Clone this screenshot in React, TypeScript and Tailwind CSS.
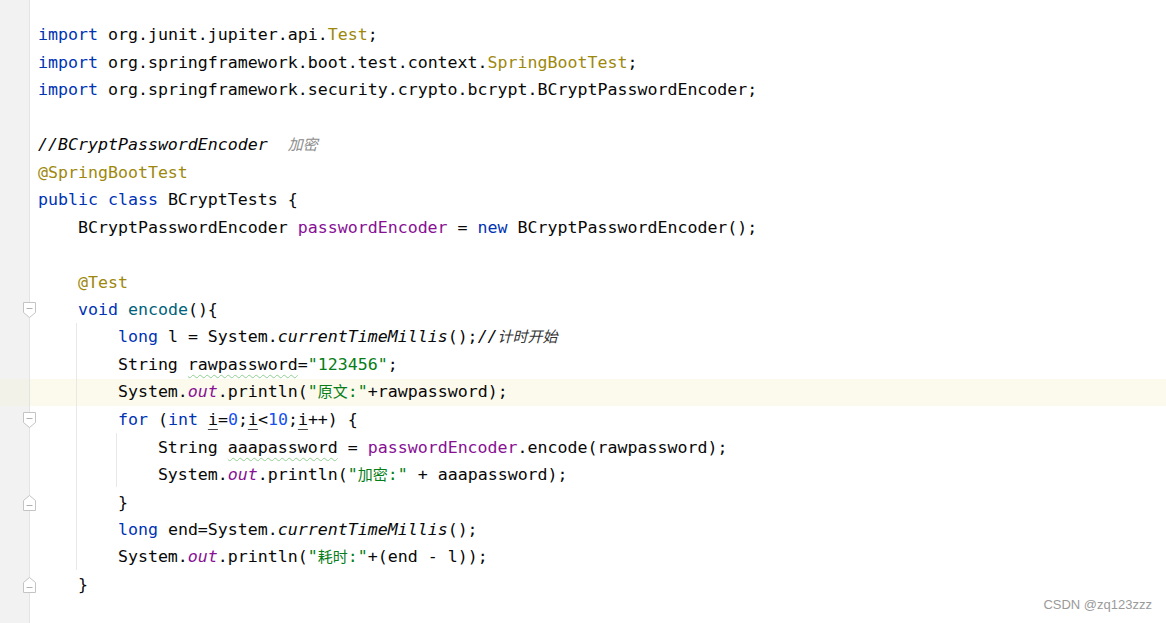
import React from 'react';

type Tok = [string, string?];

const K = 'text-[#0033b3]';
const A = 'text-[#9e880d]';
const F = 'text-[#871094]';
const FI = 'text-[#871094] italic';
const S = 'text-[#067d17]';
const N = 'text-[#1750eb]';
const C = 'text-[#8c8c8c] italic';
const M = 'text-[#00627a]';
const I = 'italic';
const W = 'underline decoration-wavy decoration-[#8fcf8f] decoration-1 underline-offset-[4px]';
const U = 'underline decoration-[#444] decoration-1 underline-offset-[4px]';
const CJK = 'text-[15px]';

const lines: Tok[][] = [
  [['import', K], [' org.junit.jupiter.api.'], ['Test', A], [';']],
  [['import', K], [' org.springframework.boot.test.context.'], ['SpringBootTest', A], [';']],
  [['import', K], [' org.springframework.security.crypto.bcrypt.BCryptPasswordEncoder;']],
  [],
  [['//BCryptPasswordEncoder  ', I], ['加密', C + ' ' + CJK]],
  [['@SpringBootTest', A]],
  [['public class', K], [' BCryptTests {']],
  [['    BCryptPasswordEncoder '], ['passwordEncoder', F], [' = '], ['new', K], [' BCryptPasswordEncoder();']],
  [],
  [['    '], ['@Test', A]],
  [['    '], ['void', K], [' '], ['encode', M], ['(){']],
  [['        '], ['long', K], [' l = System.'], ['currentTimeMillis', I], ['();'], ['//', I], ['计时开始', I + ' text-[#333] ' + CJK]],
  [['        String '], ['rawpassword', W], ['='], ['"123456"', S], [';']],
  [['        System.'], ['out', FI], ['.println('], ['"', S], ['原文', S + ' ' + CJK], [':"', S], ['+rawpassword);']],
  [['        '], ['for', K], [' ('], ['int', K], [' '], ['i', U], ['='], ['0', N], [';'], ['i', U], ['<'], ['10', N], [';'], ['i', U], ['++) {']],
  [['            String '], ['aaapassword', W], [' = '], ['passwordEncoder', F], ['.encode(rawpassword);']],
  [['            System.'], ['out', FI], ['.println('], ['"', S], ['加密', S + ' ' + CJK], [':"', S], [' + aaapassword);']],
  [['        }']],
  [['        '], ['long', K], [' end=System.'], ['currentTimeMillis', I], ['();']],
  [['        System.'], ['out', FI], ['.println('], ['"', S], ['耗时', S + ' ' + CJK], [':"', S], ['+(end - l));']],
  [['    }']],
];

const foldStart = new Set([10, 14]);
const foldEnd = new Set([17, 20]);
const caretLine = 13;

function FoldMark({ up }: { up: boolean }) {
  return (
    <svg className="absolute left-[23px] top-[6px]" width="13" height="16" viewBox="0 0 13 16">
      {up ? (
        <path d="M6.5 0.5 L12.5 5.5 L12.5 15.5 L0.5 15.5 L0.5 5.5 Z" fill="#fff" stroke="#c4c4c4" />
      ) : (
        <path d="M0.5 0.5 L12.5 0.5 L12.5 10.5 L6.5 15.5 L0.5 10.5 Z" fill="#fff" stroke="#c4c4c4" />
      )}
      <line x1="3.5" x2="9.5" y1={up ? 10.5 : 6.5} y2={up ? 10.5 : 6.5} stroke="#b0b0b0" />
    </svg>
  );
}

export default function App() {
  return (
    <div className="relative flex h-[623px] w-[1166px] flex-col overflow-hidden bg-white font-['DejaVu_Sans_Mono','Noto_Sans_CJK_SC',monospace] text-[16.6px] text-[#080808]">
      <div className="flex h-[21px] shrink-0">
        <div className="w-[30px] border-r border-[#e3e3e3] bg-[#f2f2f2]" />
      </div>
      {lines.map((toks, i) => (
        <div key={i} className={`flex h-[27.5px] shrink-0 items-center ${i === caretLine ? 'bg-[#fcfaed]' : ''}`}>
          <div className={`relative h-full w-[30px] shrink-0 border-r border-[#e3e3e3] ${i === caretLine ? 'bg-[#f3f2e9]' : 'bg-[#f2f2f2]'}`}>
            {foldStart.has(i) && <FoldMark up={false} />}
            {foldEnd.has(i) && <FoldMark up />}
          </div>
          <div className="whitespace-pre pl-[8px] leading-[27.5px]">
            {toks.map(([t, c], j) => (
              <span key={j} className={c}>{t}</span>
            ))}
          </div>
        </div>
      ))}
      <div className="flex flex-1">
        <div className="w-[30px] border-r border-[#e3e3e3] bg-[#f2f2f2]" />
      </div>

      {/* indent guides */}
      <div className="absolute left-[76px] top-[323px] h-[247px] w-px bg-[#e8e8e8]" />
      <div className="absolute left-[116px] top-[433px] h-[54px] w-px bg-[#e8e8e8]" />

      <div className="absolute bottom-[9px] right-[14px] font-['Liberation_Sans',sans-serif] text-[13px] text-[#9a9a9a]">
        CSDN @zq123zzz
      </div>
    </div>
  );
}
